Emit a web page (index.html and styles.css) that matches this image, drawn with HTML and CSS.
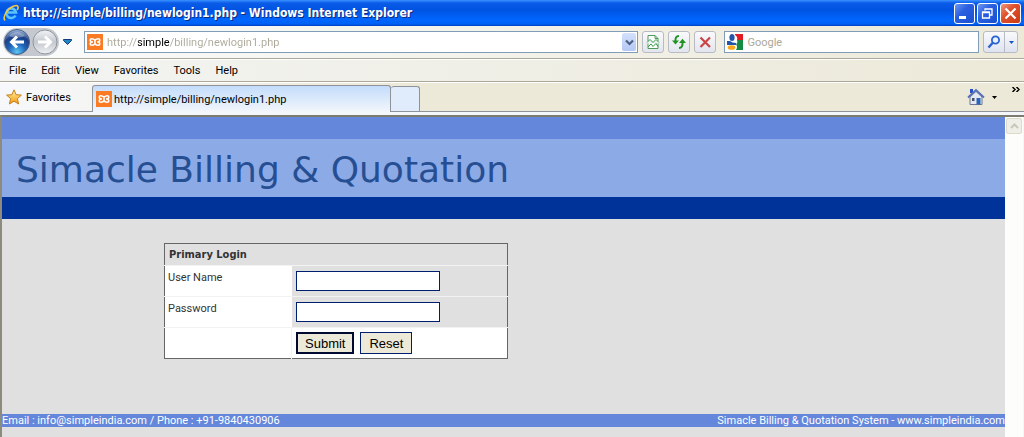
FILE: index.html
```html
<!DOCTYPE html>
<html lang="en">
<head>
    <meta charset="UTF-8">
    <meta name="viewport" content="width=device-width, initial-scale=1.0">
    <title>http://simple/billing/newlogin1.php</title>
    <link rel="stylesheet" href="styles.css">
</head>
<body>
<svg class="defs" width="0" height="0">
    <defs>
        <radialGradient id="orb-blue" cx="50%" cy="90%" r="90%">
            <stop offset="0" stop-color="#5cc8f4"/>
            <stop offset=".4" stop-color="#1e62b8"/>
            <stop offset=".7" stop-color="#1c3f86"/>
            <stop offset="1" stop-color="#a8c0e2"/>
        </radialGradient>
        <linearGradient id="orb-grey" x2="0" y2="1">
            <stop offset="0" stop-color="#f2f4f6"/>
            <stop offset=".5" stop-color="#c3c8cf"/>
            <stop offset="1" stop-color="#eef1f4"/>
        </linearGradient>
        <linearGradient id="gold" x2="0" y2="1">
            <stop offset="0" stop-color="#fff2a0"/>
            <stop offset="1" stop-color="#f29a10"/>
        </linearGradient>
        <symbol id="xampp" viewBox="0 0 16 16">
            <rect width="16" height="16" fill="#fb7a24"/>
            <path d="M6 8H4.800Q3.200 7.500 3.200 6.200Q3.200 4.800 4.800 4.800Q6.500 4.800 8 6.200Q9.500 4.800 11.200 4.800Q12.800 4.800 12.800 6.200Q12.800 7.500 11.200 8H10M4.800 8Q3.200 8.500 3.200 9.800Q3.200 11.200 4.800 11.200Q6.500 11.200 8 9.800Q9.500 11.200 11.200 11.200Q12.800 11.200 12.800 9.800Q12.800 8.500 11.200 8M8 6.200V9.800" fill="none" stroke="#fff" stroke-width="1.600"/>
        </symbol>
    </defs>
</svg>

<header class="titlebar">
    <svg class="ie-icon" width="16" height="18" viewBox="0 0 16 18">
        <path d="M12.500 11.500A4.800 4.800 0 1 1 13 8.500H5" fill="none" stroke="#5cc3fa" stroke-width="2.600"/>
        <path d="M2 16.500C-1 13 5 4 11 2C15 .5 16 3 14.200 6" fill="none" stroke="#f5c73c" stroke-width="1.600"/>
    </svg>
    <span class="window-title">http://simple/billing/newlogin1.php - Windows Internet Explorer</span>
    <div class="window-buttons">
        <button class="win-btn" aria-label="Minimize"><svg width="19" height="19" viewBox="0 0 19 19"><path d="M4 12h7v3H4z" fill="#fff"/></svg></button>
        <button class="win-btn" aria-label="Restore"><svg width="19" height="19" viewBox="0 0 19 19"><path d="M7 6.500V5h7v6h-2M4.500 8.500h7v5.500h-7zM4 8h8" fill="none" stroke="#fff" stroke-width="1.300"/></svg></button>
        <button class="win-btn win-close" aria-label="Close"><svg width="19" height="19" viewBox="0 0 19 19"><path d="M4.500 4.500l10 10M14.500 4.500l-10 10" stroke="#fff" stroke-width="2.200"/></svg></button>
    </div>
</header>

<div class="navbar">
    <div class="travel">
        <button class="plain" aria-label="Back"><svg width="28" height="28" viewBox="0 0 28 28">
            <circle cx="14" cy="14" r="12.500" fill="url(#orb-blue)" stroke="#4a6086"/>
            <path d="M6 8Q14 0 22 8Q14 11 6 8" fill="#fff" opacity=".35"/>
            <path d="M21 14H9M14 8.500L8.500 14L14 19.500" fill="none" stroke="#fff" stroke-width="3"/>
        </svg></button>
        <button class="plain" aria-label="Forward"><svg width="28" height="28" viewBox="0 0 28 28">
            <circle cx="14" cy="14" r="12" fill="url(#orb-grey)" stroke="#8f959e"/>
            <path d="M7 14H19M14 8.500L19.500 14L14 19.500" fill="none" stroke="#fff" stroke-width="3"/>
        </svg></button>
    </div>
    <button class="plain recent" aria-label="Recent pages"><svg width="9" height="6" viewBox="0 0 9 6"><path d="M.5.5h8v1L4.500 5.500L.5 1.500z" fill="#1f86c0" stroke="#123a7c"/></svg></button>
    <div class="field address">
        <svg width="16" height="16"><use href="#xampp"/></svg>
        <input class="url" type="text" aria-label="Address" value="http://simple/billing/newlogin1.php">
        <button class="drop" aria-label="Show address list"><svg width="9" height="7" viewBox="0 0 9 7"><path d="M1 1.500l3.500 3.500L8 1.500" fill="none" stroke="#4d6185" stroke-width="2.200"/></svg></button>
    </div>
    <div class="tools">
        <button class="tool" aria-label="Compatibility view"><svg width="16" height="16" viewBox="0 0 16 16">
            <path d="M3 7V1.500h7l3 3V7M10 1.500v3h3M3 9.500v5h10v-5" fill="#fff" stroke="#4f9a58"/>
            <path d="M2 8.500l3-3 3 3 3-3 3 3M3 13l3-3 2 2.500 3-3 2 3" fill="none" stroke="#2b9b3c"/>
        </svg></button>
        <button class="tool" aria-label="Refresh"><svg width="16" height="16" viewBox="0 0 16 16">
            <path d="M8 2Q4 2 4.500 7M8 14Q12 14 11.500 8" fill="none" stroke="#1f9423" stroke-width="2"/>
            <path d="M1 6.500h7L4.500 10.500zM8 9h7L11.500 4.800z" fill="#1f9423"/>
        </svg></button>
        <button class="tool" aria-label="Stop"><svg width="16" height="16" viewBox="0 0 16 16"><path d="M3.500 3.500l9.500 9.500M13 3.500l-9.500 9.500" stroke="#c94444" stroke-width="2.200"/></svg></button>
    </div>
    <div class="field search">
        <svg width="16" height="16" viewBox="0 0 16 16">
            <path d="M0 0h16v16H0z" fill="#fff"/>
            <path d="M8 0h8v6H10Q11 3 8 1z" fill="#e31b23"/>
            <path d="M10 6h6v10H9Q11 13 9 10Q11 9 10 6z" fill="#168a43"/>
            <ellipse cx="5" cy="3.500" rx="2.600" ry="3.500" fill="#2455a8"/>
            <path d="M0 7h3q2 2 6 2v2H0z" fill="#2455a8"/>
            <ellipse cx="4.500" cy="13.500" rx="3.800" ry="2.300" fill="#f8a81b"/>
        </svg>
        <input class="query" type="text" aria-label="Search" placeholder="Google">
    </div>
    <div class="search-go">
        <button class="go" aria-label="Search"><svg width="14" height="14" viewBox="0 0 14 14"><circle cx="8.500" cy="5" r="3.600" fill="#e8f2ff" stroke="#2b62d0" stroke-width="1.800"/><path d="M6 7.500L1.500 12.500" stroke="#2b62d0" stroke-width="2.400"/></svg></button>
        <button class="go go-menu" aria-label="Search options"><svg width="5" height="3" viewBox="0 0 5 3"><path d="M0 0h5L2.500 3z" fill="#1455c8"/></svg></button>
    </div>
</div>

<nav class="menubar">
    <button class="plain">File</button>
    <button class="plain">Edit</button>
    <button class="plain">View</button>
    <button class="plain">Favorites</button>
    <button class="plain">Tools</button>
    <button class="plain">Help</button>
</nav>

<div class="tabbar">
    <button class="plain favorites">
        <svg width="16" height="16" viewBox="0 0 16 16"><path d="M8 .8l2.100 4.900 5.300.4-4 3.500 1.200 5.400L8 12.200 3.400 15l1.200-5.400-4-3.500 5.300-.4z" fill="url(#gold)" stroke="#c77f1c"/></svg>
        Favorites
    </button>
    <a class="tab" href="#page">
        <svg width="16" height="16"><use href="#xampp"/></svg>
        http://simple/billing/newlogin1.php
    </a>
    <button class="new-tab" aria-label="New tab"></button>
    <div class="commands">
        <button class="plain" aria-label="Home"><svg width="18" height="18" viewBox="0 0 18 18">
            <path d="M3 9v7.500h12V9L9 3.500z" fill="#e4e8f2" stroke="#6c7894"/>
            <path d="M3 1h3v4H3z" fill="#2450c8"/>
            <path d="M1 9.500L9 2l8 7.500" fill="none" stroke="#5870b8" stroke-width="1.800"/>
            <path d="M9.500 10h4v6.500h-4z" fill="#2d64b4"/>
            <path d="M5 10h2.500v3H5z" fill="#46506a"/>
        </svg></button>
        <button class="plain" aria-label="Home options"><svg width="5" height="3" viewBox="0 0 5 3"><path d="M0 0h5L2.500 3z"/></svg></button>
        <button class="plain more" aria-label="More commands"><svg width="8" height="5" viewBox="0 0 8 5"><path d="M.5 0L3 2.500.5 5M4.500 0L7 2.500 4.500 5" fill="none" stroke="#000" stroke-width="1.500"/></svg></button>
    </div>
</div>

<div class="viewport">
    <main id="page" class="page">
        <div class="strip"></div>
        <h1 class="banner">Simacle Billing &amp; Quotation</h1>
        <div class="strip strip-dark"></div>

        <form class="login" action="#">
            <table class="login-table">
                <colgroup>
                    <col class="name-col">
                    <col>
                </colgroup>
                <tr>
                    <th colspan="2">Primary Login</th>
                </tr>
                <tr>
                    <td class="name"><label for="username">User Name</label></td>
                    <td><input id="username" type="text"></td>
                </tr>
                <tr>
                    <td class="name"><label for="password">Password</label></td>
                    <td><input id="password" type="password"></td>
                </tr>
                <tr class="login-actions">
                    <td></td>
                    <td>
                        <div class="actions">
                            <button class="btn btn-default" type="submit">Submit</button>
                            <button class="btn" type="reset">Reset</button>
                        </div>
                    </td>
                </tr>
            </table>
        </form>

        <footer class="footer">
            <span>Email : info@simpleindia.com / Phone : +91-9840430906</span>
            <span>Simacle Billing &amp; Quotation System - www.simpleindia.com</span>
        </footer>
    </main>
    <div class="scrollbar">
        <button class="scroll-up" aria-label="Scroll up"><svg width="9" height="6" viewBox="0 0 9 6"><path d="M1 5l3.500-3.500L8 5" fill="none" stroke="#c9c7ba" stroke-width="2"/></svg></button>
    </div>
</div>
</body>
</html>
```

FILE: styles.css
```css
* {
    box-sizing: border-box;
}
body {
    margin: 0;
    min-height: 100vh;
    display: flex;
    flex-direction: column;
    font-family: Roboto, Tahoma, sans-serif;
    font-size: 11px;
    color: #000;
    background-color: #f3f6fb;
}
button, input {
    font: inherit;
    color: inherit;
    margin: 0;
    padding: 0;
}
svg {
    display: block;
    flex: none;
}
.defs {
    position: absolute;
}
.plain {
    border: none;
    background: none;
}

/* window title */
.titlebar {
    height: 26px;
    display: flex;
    align-items: center;
    gap: 4px;
    padding: 0 3px;
    background: linear-gradient(#3a92ff, #0a5ce8 3px, #0053e1 10px, #0066ff 20px, #0060f5 24px, #0040c0);
}
.window-title {
    flex: 1;
    font-family: "DejaVu Sans Condensed", "DejaVu Sans", sans-serif;
    font-size: 12px;
    font-weight: bold;
    color: #fff;
    text-shadow: 1px 1px #0a2a80;
    white-space: nowrap;
}
.window-buttons {
    display: flex;
    gap: 2px;
}
.win-btn {
    width: 21px;
    height: 21px;
    border: 1px solid #fff;
    border-radius: 3px;
    background: linear-gradient(135deg, #6f98f2, #2a5fe0 40%, #1a4fd0);
}
.win-close {
    background: linear-gradient(135deg, #f09a80, #e0502c 40%, #c83a14);
}

/* address and search */
.navbar {
    height: 33px;
    display: flex;
    align-items: center;
    padding: 0 6px 0 3px;
    background: linear-gradient(90deg, #fafbfc, #ece9d8);
    border-bottom: 1px solid #aca899;
}
.travel {
    display: flex;
    border-radius: 14px;
    background-color: #c5c9cf;
}
.recent {
    margin: 0 12px 0 4px;
}
.field {
    height: 22px;
    display: flex;
    align-items: center;
    gap: 4px;
    padding: 0 1px 0 2px;
    background-color: #fff;
    border: 1px solid #7f9db9;
}
.field input {
    flex: 1;
    min-width: 0;
    border: none;
    outline: none;
}
.address {
    flex: 557;
}
/* only the host name is shown in black */
.url {
    color: transparent;
    background: linear-gradient(90deg, #aca899 31px, #000 31px, #000 63px, #aca899 63px);
    -webkit-background-clip: text;
    background-clip: text;
}
.drop {
    width: 14px;
    height: 18px;
    display: flex;
    align-items: center;
    justify-content: center;
    border: none;
    border-radius: 2px;
    background: linear-gradient(#d4e0fc, #b4c8f4);
}
.tools {
    display: flex;
    gap: 4px;
    margin: 0 8px 0 4px;
}
.tool {
    width: 22px;
    height: 22px;
    padding: 2px;
    border: 1px solid #b9bbc4;
    border-radius: 3px;
    background: linear-gradient(#fafafc, #e3e5ef);
}
.search {
    flex: 253;
}
.query::placeholder {
    color: #aca899;
    opacity: 1;
}
.search-go {
    display: flex;
    margin-left: 4px;
    border: 1px solid #b9bbc4;
    border-radius: 3px;
    background: linear-gradient(#fafafc, #dfe3f0);
}
.go {
    width: 20px;
    height: 20px;
    display: flex;
    align-items: center;
    justify-content: center;
    border: none;
    background: none;
}
.go-menu {
    width: 13px;
    border-left: 1px solid #b9bbc4;
}

/* menus */
.menubar {
    height: 23px;
    display: flex;
    align-items: center;
    gap: 15px;
    padding: 0 9px;
    background: linear-gradient(90deg, #f3f4f3, #ece9d8);
    border-top: 1px solid #fff;
    border-bottom: 1px solid #aca899;
}

/* tabs */
.tabbar {
    height: 30px;
    display: flex;
    align-items: flex-end;
    background: linear-gradient(90deg, #f7f8fb, #ece9d8 40%, #ece9d8);
    border-top: 1px solid #fff;
    border-bottom: 1px solid #8e939a;
}
.favorites {
    width: 92px;
    height: 28px;
    display: flex;
    align-items: center;
    gap: 4px;
    padding-left: 6px;
}
.tab {
    width: 299px;
    height: 27px;
    display: flex;
    align-items: center;
    gap: 2px;
    margin-bottom: -1px;
    padding-left: 3px;
    color: #000;
    text-decoration: none;
    white-space: nowrap;
    border: 1px solid #8e939a;
    border-bottom: none;
    border-radius: 3px 3px 0 0;
    background: linear-gradient(#c3dcfb, #f3f6fb);
}
.new-tab {
    width: 29px;
    height: 25px;
    border: 1px solid #8e939a;
    border-left: none;
    border-bottom: none;
    border-radius: 3px 3px 0 0;
    background-color: #e0ebfb;
}
.commands {
    flex: 1;
    height: 28px;
    display: flex;
    align-items: center;
    justify-content: flex-end;
    gap: 7px;
    padding-right: 4px;
}
.more {
    align-self: flex-start;
    margin: 4px 0 0 8px;
}

/* document area */
.viewport {
    flex: 1;
    display: flex;
    margin-top: 3px;
    border-top: 2px solid #7c7b70;
    border-left: 2px solid #8d8b7e;
}
.page {
    flex: 1;
    background-color: #e0e0e0;
}
.strip {
    height: 22px;
    background-color: #6487dc;
}
.strip-dark {
    background-color: #003399;
}
.banner {
    margin: 0;
    padding: 4px 14px 0;
    line-height: 54px;
    font-family: "DejaVu Sans", Verdana, sans-serif;
    font-size: 36px;
    font-weight: normal;
    color: #264f93;
    background-color: #8caae6;
}
.login {
    margin: 24px 0 55px 162px;
}
.login-table {
    width: 344px;
    table-layout: fixed;
    border-collapse: collapse;
    border: 1px solid #666;
    color: #333;
}
.name-col {
    width: 127px;
}
.login-table th {
    height: 22px;
    padding: 0 4px;
    font-family: "DejaVu Sans Condensed", "DejaVu Sans", sans-serif;
    text-align: left;
}
.login-table td {
    height: 31px;
    padding: 4px;
    vertical-align: top;
    border-top: 1px solid #f2f2f2;
}
.login-table .name {
    padding: 5px 3px;
    background-color: #fff;
}
.login-table input {
    display: block;
    width: 144px;
    height: 20px;
    margin-top: 1px;
    padding: 1px 3px;
    background-color: #fff;
    border: 1px solid #001e6e;
}
.login-actions {
    background-color: #fff;
}
.login-actions td + td {
    border-left: 1px solid #f2f2f2;
}
.actions {
    display: flex;
    gap: 6px;
}
.btn {
    height: 22px;
    padding: 0 8px;
    font-family: "Liberation Sans", Arial, sans-serif;
    font-size: 13px;
    color: #000;
    background-color: #ece9d8;
    border: 1px solid #001e6e;
}
.btn-default {
    padding: 0 7px;
    border: 2px solid #000a30;
}
.footer {
    display: flex;
    justify-content: space-between;
    line-height: 13px;
    color: #fff;
    background-color: #6487dc;
}
.scrollbar {
    width: 18px;
    margin-right: 1px;
    padding: 1px;
    background-color: #fdfdfb;
}
.scroll-up {
    width: 16px;
    height: 16px;
    display: flex;
    align-items: center;
    justify-content: center;
    border: 1px solid #dcdacd;
    border-radius: 2px;
    background-color: #f0efe7;
}
```
